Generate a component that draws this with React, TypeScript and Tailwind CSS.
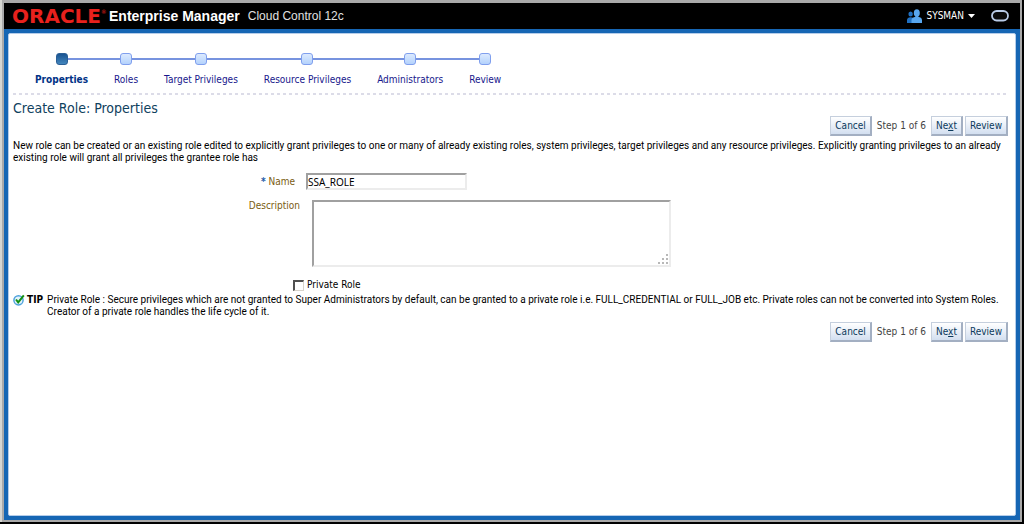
import React, { useState } from 'react';
import clsx from 'clsx';

const STEPS = ['Properties', 'Roles', 'Target Privileges', 'Resource Privileges', 'Administrators', 'Review'];

const UserIcon = () => (
  <svg width="15" height="14" viewBox="0 0 15 14" aria-hidden="true">
    <ellipse cx="3.600" cy="5" rx="2.200" ry="2.600" fill="#1f6fc0" />
    <path d="M0 14v-3c0-1.800 1.400-2.600 3.600-2.800 2.200.2 3.600 1 3.600 2.800v3z" fill="#1f6fc0" />
    <ellipse cx="9.800" cy="4" rx="3" ry="3.800" fill="#58a6ee" />
    <path d="M4.500 14v-2.800C4.500 9 6.500 8.400 8.400 7.800V6h2.800v1.800c2 .6 3.800 1.200 3.800 3.400V14z" fill="#58a6ee" />
  </svg>
);

const TipIcon = () => (
  <svg width="12" height="12" viewBox="0 0 12 12" aria-hidden="true">
    <circle cx="5.500" cy="6.300" r="4.600" fill="#e4f3fd" stroke="#4fa3dc" strokeWidth="1.500" />
    <path d="M3 5.500l2.200 2.800L10.800 1.300" fill="none" stroke="#129012" strokeWidth="2" />
  </svg>
);

const Header = () => (
  <header className="flex h-[26px] items-center justify-between bg-black pl-2 pr-[11px] text-white">
    <div className="flex items-center whitespace-nowrap">
      <div className="flex w-[97px] items-center text-[#e8211d]">
        <span className="font-['DejaVu_Sans'] text-[20px] font-bold leading-5">ORACLE</span>
        <span className="self-start text-[6px] leading-3">®</span>
      </div>
      <span className="font-['Liberation_Sans'] text-[14px] font-bold leading-4">Enterprise Manager</span>
      <span className="ml-2 font-['Liberation_Sans'] text-[12px] leading-4 text-[#e0e0e0]">Cloud Control 12c</span>
    </div>
    <div className="flex items-center">
      <button type="button" className="flex items-center gap-1">
        <UserIcon />
        <span>SYSMAN</span>
        <svg width="7" height="4" viewBox="0 0 7 4" aria-hidden="true">
          <path d="M0 0h7L3.500 4z" fill="#fff" />
        </svg>
      </button>
      <svg className="ml-4" width="18" height="12" viewBox="0 0 18 12" aria-hidden="true">
        <rect x="1" y="1" width="16" height="9.500" rx="4.700" fill="#0a0a0a" stroke="#b9cbe6" strokeWidth="1.800" />
      </svg>
    </div>
  </header>
);

interface TrainProps {
  current: number;
  onSelect: (index: number) => void;
}

const Train: React.FC<TrainProps> = ({ current, onSelect }) => (
  <nav className="flex pb-1.5 pl-[9px] pt-[19px]">
    {STEPS.map((step, i) => (
      <button key={step} type="button" onClick={() => onSelect(i)} className="flex flex-col">
        <span className="flex w-full items-center">
          <span className={clsx('h-[2px] flex-1', i > 0 && 'bg-[#7793df]')} />
          <span
            className={clsx(
              'size-3 rounded-[3px] border bg-linear-to-b',
              i === current
                ? 'border-[#2b5f96] from-[#1a5492] to-[#4286bd]'
                : 'border-[#7f9fee] from-[#dceafe] to-[#b4d2fc]'
            )}
          />
          <span className={clsx('h-[2px] flex-1', i < STEPS.length - 1 && 'bg-[#7793df]')} />
        </span>
        <span
          className={clsx(
            'mt-2 px-[13px] leading-3.5 whitespace-nowrap',
            i === current ? 'font-bold text-[#003286]' : 'text-[#17178c]'
          )}
        >
          {step}
        </span>
      </button>
    ))}
  </nav>
);

const ToolButton: React.FC<{ children: React.ReactNode }> = ({ children }) => (
  <button
    type="button"
    className="h-5 border border-b-2 border-r-2 border-[#c5cfdd] border-b-[#a3afc2] border-r-[#a3afc2] bg-linear-to-b from-white to-[#d3dff0] px-1 text-[#0b3a5c]"
  >
    {children}
  </button>
);

const StepBar = () => (
  <div className="flex items-center justify-end gap-[2px] leading-4">
    <ToolButton>Cancel</ToolButton>
    <span className="px-[3px] text-[#444]">Step 1 of 6</span>
    <ToolButton>
      Ne<u>x</u>t
    </ToolButton>
    <ToolButton>Review</ToolButton>
  </div>
);

export default function App() {
  const [current, setCurrent] = useState(0);
  const [name, setName] = useState('SSA_ROLE');
  const [description, setDescription] = useState('');
  const [isPrivate, setIsPrivate] = useState(false);

  return (
    <div className="flex min-h-screen flex-col border-b-2 border-r-2 border-black bg-[#d6d6d2] pl-[2px] font-['DejaVu_Sans_Condensed','DejaVu_Sans',sans-serif] text-[10px] leading-3 text-black">
      <div className="flex flex-1 flex-col border-2 border-t-3 border-[#a9a9a9]">
        <Header />
        <div className="flex flex-1 flex-col bg-[#1666b4] p-1">
          <main className="flex-1 rounded-[2px] border border-[#b5cdea] bg-white px-1 pr-[7px]">
            <Train current={current} onSelect={setCurrent} />
            <div className="h-[2px] bg-[repeating-linear-gradient(to_right,#dcdce8_0_3px,transparent_3px_6px)]" />

            <h1 className="mt-[5px] text-[14px] leading-4 text-[#0f415e]">Create Role: Properties</h1>
            <StepBar />

            <p className="mt-1 font-[Roboto,sans-serif]">
              New role can be created or an existing role edited to explicitly grant privileges to one or many of already
              existing roles, system privileges, target privileges and any resource privileges. Explicitly granting
              privileges to an already existing role will grant all privileges the grantee role has
            </p>

            <div className="mt-[9px] flex items-center">
              <label htmlFor="name" className="w-[282px] text-right text-[#7a5c10]">
                <span className="font-bold text-[#1d5aa5]">*</span> Name
              </label>
              <input
                id="name"
                value={name}
                onChange={(e) => setName(e.target.value)}
                className="ml-[11px] h-[17px] w-[161px] border-2 border-[#ececec] border-l-[#a0a0a0] border-t-[#a0a0a0] bg-white font-['Noto_Sans',sans-serif] leading-[13px] outline-none"
              />
            </div>

            <div className="mt-[10px] flex items-start">
              <label htmlFor="description" className="w-[287px] text-right text-[#7a5c10]">
                Description
              </label>
              <div className="relative ml-3">
                <textarea
                  id="description"
                  value={description}
                  onChange={(e) => setDescription(e.target.value)}
                  className="block h-[67px] w-[359px] resize-none border-2 border-[#ececec] border-l-[#a0a0a0] border-t-[#a0a0a0] bg-white p-1 outline-none"
                />
                <svg className="absolute bottom-[3px] right-[3px]" width="10" height="10" viewBox="0 0 10 10" aria-hidden="true">
                  <path d="M8 0h2v2H8zM4 4h2v2H4zM8 4h2v2H8zM0 8h2v2H0zM4 8h2v2H4zM8 8h2v2H8z" fill="#b8b8b8" />
                </svg>
              </div>
            </div>

            <label className="ml-[280px] mt-3 flex w-fit items-center gap-[3px]">
              <input
                type="checkbox"
                checked={isPrivate}
                onChange={(e) => setIsPrivate(e.target.checked)}
                className="size-[11px] appearance-none border border-l-2 border-t-2 border-[#d8d4cc] border-l-[#505050] border-t-[#505050] bg-white checked:bg-[#1d5aa5]"
              />
              Private Role
            </label>

            <div className="mt-[3px] flex">
              <TipIcon />
              <strong className="ml-[2px] mr-1">TIP</strong>
              <p className="flex-1 font-[Roboto,sans-serif]">
                Private Role : Secure privileges which are not granted to Super Administrators by default, can be granted
                to a private role i.e. FULL_CREDENTIAL or FULL_JOB etc. Private roles can not be converted into System
                Roles. Creator of a private role handles the life cycle of it.
              </p>
            </div>

            <div className="mt-1">
              <StepBar />
            </div>
          </main>
        </div>
      </div>
    </div>
  );
}
